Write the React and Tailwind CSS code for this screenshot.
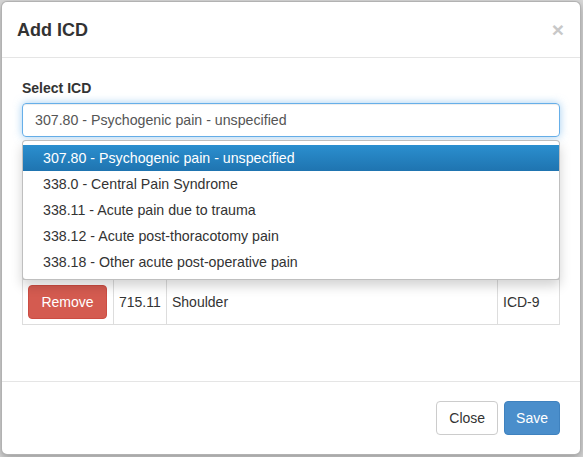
export default function App() {
  const items = [
    "307.80 - Psychogenic pain - unspecified",
    "338.0 - Central Pain Syndrome",
    "338.11 - Acute pain due to trauma",
    "338.12 - Acute post-thoracotomy pain",
    "338.18 - Other acute post-operative pain",
  ];
  return (
    <div className="w-[583px] h-[457px] bg-[#d9d9d9] pl-[1px] pt-[1px] overflow-hidden font-['Liberation_Sans',Arial,sans-serif] text-[#333]">
      <div className="w-[580px] h-[454px] bg-white border border-black/30 rounded-[6px] shadow-[0_3px_9px_rgba(0,0,0,0.3)] flex flex-col">
        {/* header */}
        <div className="h-[56px] px-[15px] flex items-center justify-between border-b border-[#e5e5e5] shrink-0">
          <h4 className="text-[18px] leading-[26px] font-bold text-[#333]">Add ICD</h4>
          <span className="text-[21px] leading-none font-bold text-[#c8c8c8] mr-[1px]">×</span>
        </div>
        {/* body */}
        <div className="flex-1 px-[20px] pt-[20px]">
          <label className="block text-[14px] leading-[20px] font-bold mb-[5px]">Select ICD</label>
          <div className="relative">
            <div className="h-[34px] border border-[#66afe9] rounded-[4px] px-[12px] pt-[1px] flex items-center text-[14.2px] text-[#555] shadow-[inset_0_1px_1px_rgba(0,0,0,0.075),0_0_8px_rgba(102,175,233,0.6)]">
              307.80 - Psychogenic pain - unspecified
            </div>
            <div className="absolute left-0 right-0 top-[37px] z-10 bg-white border border-black/25 rounded-[4px] py-[4px] shadow-[0_6px_12px_rgba(0,0,0,0.175)]">
              {items.map((t, i) => (
                <div
                  key={t}
                  className={
                    i === 0
                      ? "h-[26px] px-[20px] pt-[1px] flex items-center text-[14.2px] text-white bg-gradient-to-b from-[#2b8fcf] to-[#1f74b0]"
                      : "h-[26px] px-[20px] pt-[1px] flex items-center text-[14.2px] text-[#333]"
                  }
                >
                  {t}
                </div>
              ))}
            </div>
          </div>
          {/* table */}
          <div className="mt-[15px] border-l border-r border-t border-[#ddd] text-[14px]">
            <div className="grid grid-cols-[90px_53px_331px_1fr] h-[37px] border-b border-[#ddd]">
              <div></div>
              <div className="border-l border-[#ddd]"></div>
              <div className="border-l border-[#ddd]"></div>
              <div className="border-l border-[#ddd]"></div>
            </div>
            {[0, 1].map((k) => (
              <div key={k} className="grid grid-cols-[90px_53px_331px_1fr] h-[45px] border-b border-[#ddd]">
                <div></div>
                <div className="border-l border-[#ddd]"></div>
                <div className="border-l border-[#ddd]"></div>
                <div className="border-l border-[#ddd]"></div>
              </div>
            ))}
            <div className="grid grid-cols-[90px_53px_331px_1fr] h-[45px] border-b border-[#ddd]">
              <div className="px-[5px] flex items-center">
                <div className="h-[34px] w-[79px] rounded-[4px] bg-[#d45b50] border border-[#cc4c42] text-white flex items-center justify-center">
                  Remove
                </div>
              </div>
              <div className="px-[5px] flex items-center border-l border-[#ddd]">715.11</div>
              <div className="px-[5px] flex items-center border-l border-[#ddd]">Shoulder</div>
              <div className="px-[5px] flex items-center border-l border-[#ddd]">ICD-9</div>
            </div>
          </div>
        </div>
        {/* footer */}
        <div className="shrink-0 border-t border-[#e5e5e5] px-[20px] pt-[19px] pb-[19px] flex justify-end gap-[6px] text-[14px]">
          <div className="h-[34px] px-[12px] rounded-[4px] border border-[#ccc] bg-white text-[#333] flex items-center">Close</div>
          <div className="h-[34px] px-[11px] rounded-[4px] border border-[#3f82bf] bg-[#4a8ecb] text-white flex items-center">Save</div>
        </div>
      </div>
    </div>
  );
}
